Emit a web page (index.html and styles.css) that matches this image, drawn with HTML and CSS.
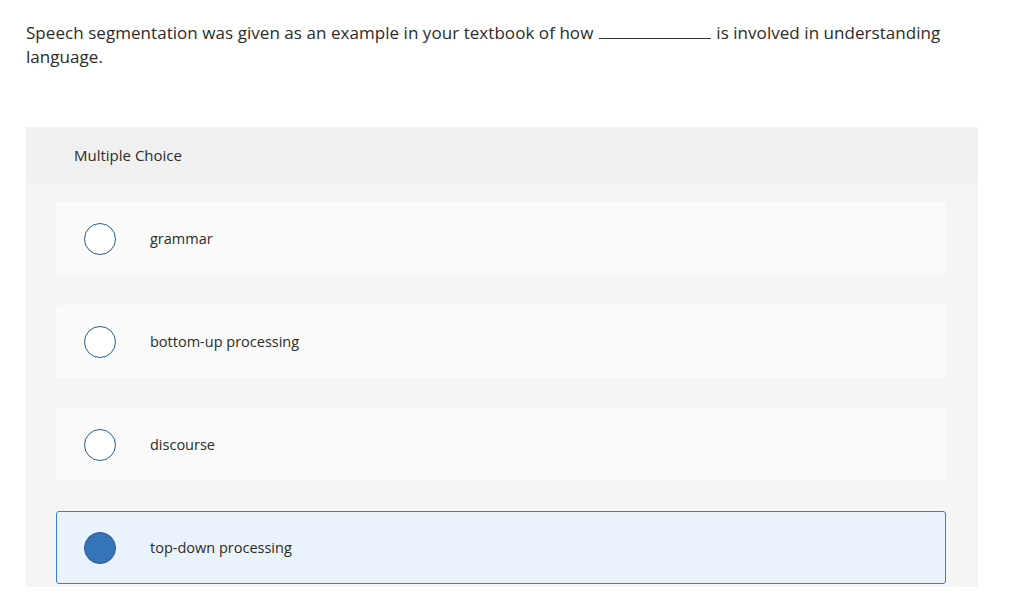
FILE: index.html
```html
<!DOCTYPE html>
<html lang="en">

<head>
    <meta charset="UTF-8">
    <title>Multiple Choice</title>
    <link rel="stylesheet" href="styles.css">
</head>

<body>
    <div class="container">
        <p class="prompt"><span>Speech segmentation was given as an example in your textbook of how</span> <span class="blank"></span> <span>is involved in understanding</span> <span>language.</span></p>

        <div class="question">
            <div class="question-header">Multiple Choice</div>
            <div class="choices">
                <label class="choice">
                    <span class="radio"></span>
                    <span class="choice-text">grammar</span>
                </label>
                <label class="choice">
                    <span class="radio"></span>
                    <span class="choice-text">bottom-up processing</span>
                </label>
                <label class="choice">
                    <span class="radio"></span>
                    <span class="choice-text">discourse</span>
                </label>
                <label class="choice selected">
                    <span class="radio"></span>
                    <span class="choice-text">top-down processing</span>
                </label>
            </div>
        </div>
    </div>
</body>

</html>
```

FILE: styles.css
```css
:root {
    --text-color: #2b2b2b;
    --header-bg: #f0f0f0;
    --panel-bg: #f5f5f5;
    --choice-bg: #fafafa;
    --radio-border: #2a5f96;
    --selected-bg: #eaf2fb;
    --selected-border: #3a7ccb;
    --selected-fill: #3574b9;
}

* {
    margin: 0;
    padding: 0;
    box-sizing: border-box;
    font-family: 'Open Sans', Lato, sans-serif;
}

body {
    background-color: #fff;
    color: var(--text-color);
}

.container {
    padding: 21px 46px 0 26px;
}

.prompt {
    font-size: 17px;
    line-height: 24px;
    letter-spacing: 0.05px;
    max-width: 930px;
}

.blank {
    display: inline-block;
    width: 112px;
    height: 14px;
    border-bottom: 1px solid #333;
    margin: 0 1px;
}

.question {
    margin-top: 58px;
    background-color: var(--panel-bg);
}

.question-header {
    background-color: var(--header-bg);
    height: 56px;
    display: flex;
    align-items: center;
    padding-left: 48px;
    font-size: 15px;
}

.choices {
    padding: 19px 32px 3px 30px;
    display: flex;
    flex-direction: column;
    gap: 30px;
}

.choice {
    height: 73px;
    background-color: var(--choice-bg);
    border: 1px solid transparent;
    border-radius: 3px;
    display: flex;
    align-items: center;
    padding-left: 27px;
    gap: 34px;
    font-size: 14.5px;
    cursor: pointer;
}

.radio {
    width: 32px;
    height: 32px;
    border-radius: 50%;
    border: 1.5px solid var(--radio-border);
    background-color: #fff;
    flex-shrink: 0;
}

.choice.selected {
    background-color: var(--selected-bg);
    border-color: var(--selected-border);
}

.choice.selected .radio {
    background-color: var(--selected-fill);
    border-color: #25578f;
}
```
